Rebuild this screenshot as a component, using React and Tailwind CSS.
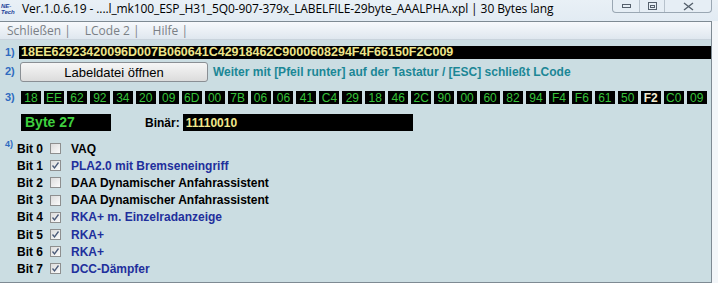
import React from 'react';

const hexBytes = ['18', 'EE', '62', '92', '34', '20', '09', '6D', '00', '7B', '06', '06', '41', 'C4', '29', '18', '46', '2C', '90', '00', '60', '82', '94', 'F4', 'F6', '61', '50', 'F2', 'C0', '09'];
const selected = 27;

const bits = [
  { label: 'VAQ', on: false },
  { label: 'PLA2.0 mit Bremseneingriff', on: true },
  { label: 'DAA Dynamischer Anfahrassistent', on: false },
  { label: 'DAA Dynamischer Anfahrassistent', on: false },
  { label: 'RKA+ m. Einzelradanzeige', on: true },
  { label: 'RKA+', on: true },
  { label: 'RKA+', on: true },
  { label: 'DCC-Dämpfer', on: true },
];

function CheckBox({ on }) {
  return (
    <div className="w-[11px] h-[11px] border border-[#8e8f8f] bg-gradient-to-br from-[#dcdcdc] to-[#fbfbfb] flex items-center justify-center">
      {on && (
        <svg width="9" height="9" viewBox="0 0 9 9">
          <path d="M1.5 4.5 L3.5 7 L7.5 1.5" fill="none" stroke="#4a5a78" strokeWidth="1.3" />
        </svg>
      )}
    </div>
  );
}

function Num({ children }) {
  return <span className="w-[19px] pl-[5px] text-[11px] font-bold text-[#2f6bc0] shrink-0">{children}</span>;
}

export default function App() {
  return (
    <div className="w-[718px] h-[283px] bg-[#f3f6f9] overflow-hidden font-['Liberation_Sans',Arial,sans-serif]">
      {/* title bar */}
      <div className="h-[21px] flex items-start justify-between bg-gradient-to-b from-[#e9f0f6] to-[#e2ebf3]">
        <div className="flex items-center h-[18px]">
          <div className="w-[20px] pl-[1px] leading-[6px] text-[6px] font-bold italic text-[#1d3f9a]">
            <div>NE-</div>
            <div>Tech</div>
          </div>
          <span className="ml-[2px] text-[12px] text-black font-['Open_Sans',sans-serif] tracking-[-0.1px]">
            Ver.1.0.6.19 - ....l_mk100_ESP_H31_5Q0-907-379x_LABELFILE-29byte_AAALPHA.xpl | 30 Bytes lang
          </span>
        </div>
        <div className="mr-[6px] flex h-[13px] border border-t-0 border-[#9aa7b3] rounded-b-[4px] bg-[#e6eef5] text-[#55606c]">
          <div className="w-[27px] flex items-center justify-center border-r border-[#b7c2cc]">
            <div className="w-[9px] h-[4px] border border-[#55606c]" />
          </div>
          <div className="w-[25px] flex items-center justify-center border-r border-[#b7c2cc]">
            <div className="w-[9px] h-[8px] border border-[#55606c] flex items-center justify-center">
              <div className="w-[5px] h-[3px] border border-[#55606c]" />
            </div>
          </div>
          <div className="w-[46px] flex items-center justify-center">
            <svg width="11" height="9" viewBox="0 0 11 9">
              <path d="M1 1 L10 8 M10 1 L1 8" stroke="#55606c" strokeWidth="1.4" />
            </svg>
          </div>
        </div>
      </div>

      {/* client area */}
      <div className="w-[712px] h-[262px] border-t border-r border-b border-[#7e8a93] flex flex-col">
        <div className="h-[18px] flex items-center bg-gradient-to-b from-[#f7f9fc] to-[#dfe7ef] border-b border-[#c9d3dc] text-[12px] text-[#7a7f85] font-['Open_Sans',sans-serif]">
          <span className="ml-[7px]">Schließen |</span>
          <span className="ml-[14px]">LCode 2 |</span>
          <span className="ml-[13px]">Hilfe |</span>
        </div>

        <div className="flex-1 bg-[#cbdde2] flex flex-col">
          {/* 1) */}
          <div className="mt-[6px] flex items-center h-[13px]">
            <Num>1)</Num>
            <div className="flex-1 h-[13px] bg-black flex items-center pl-[2px] text-[12.5px] font-bold text-[#eee58a] leading-none">
              18EE62923420096D007B060641C42918462C9000608294F4F66150F2C009
            </div>
          </div>

          {/* 2) */}
          <div className="mt-[1px] flex items-center h-[23px]">
            <Num>2)</Num>
            <button className="ml-[1px] w-[188px] h-[20px] rounded-[3px] border border-[#8a8f94] bg-gradient-to-b from-[#f6f6f6] to-[#dcdcdc] text-[13px] text-black">
              Labeldatei öffnen
            </button>
            <span className="ml-[5px] text-[12px] font-bold text-[#1b8796]">
              Weiter mit [Pfeil runter] auf der Tastatur / [ESC] schließt LCode
            </span>
          </div>

          {/* 3) */}
          <div className="mt-[8px] flex items-center h-[13px]">
            <Num>3)</Num>
            <div className="ml-[2px] w-[686px] flex justify-between">
              {hexBytes.map((b, i) => (
                <div
                  key={i}
                  className={`w-[20px] h-[13px] bg-black flex items-center justify-center text-[12px] leading-none ${
                    i === selected ? 'text-[#f3eed2] font-bold' : 'text-[#36c23a]'
                  }`}
                >
                  {b}
                </div>
              ))}
            </div>
          </div>

          <div className="mt-[10px] flex items-center h-[17px]">
            <div className="ml-[21px] w-[90px] h-[17px] bg-black flex items-center pl-[4px] text-[14px] font-bold text-[#3fd03f]">
              Byte 27
            </div>
            <span className="ml-[34px] text-[12px] font-bold text-black">Binär:</span>
            <div className="ml-[3px] w-[230px] h-[17px] bg-black flex items-center pl-[3px] text-[12px] font-bold text-[#f0e68c]">
              11110010
            </div>
          </div>

          {/* 4) */}
          <div className="mt-[8px] flex">
            <span className="w-[17px] pl-[5px] pt-[1px] text-[9px] font-bold text-[#2f6bc0] leading-none">4)</span>
            <div className="flex flex-col pt-[1px]">
              {bits.map((b, i) => (
                <div key={i} className="h-[17.2px] flex items-center text-[12px] font-bold">
                  <span className="w-[33px] text-black">Bit {i}</span>
                  <CheckBox on={b.on} />
                  <span className={`ml-[10px] ${b.on ? 'text-[#1f2f9c]' : 'text-black'}`}>{b.label}</span>
                </div>
              ))}
            </div>
          </div>
        </div>
      </div>
    </div>
  );
}
